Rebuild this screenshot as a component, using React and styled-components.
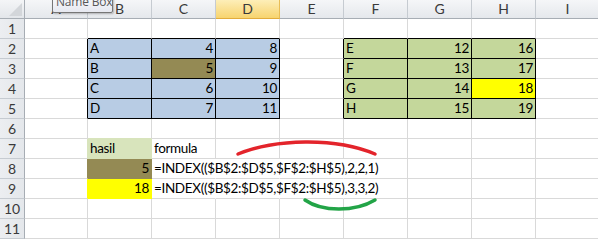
import React from "react";
import styled, { createGlobalStyle } from "styled-components";

const Global = createGlobalStyle`
  html, body { margin: 0; padding: 0; background: #fff; overflow: hidden; }
  body { width: 598px; height: 240px; }
`;

const GRID = "#d9d9d9";
const BLACK = "#000";
const HEAD_LINE = "#c6cbd1";
const HEAD_EDGE = "#a7adb4";

const Wrap = styled.div`
  position: relative;
  width: 598px;
  height: 240px;
  overflow: hidden;
  font-family: Lato, "Liberation Sans", sans-serif;
`;

const Sheet = styled.div`
  display: grid;
  grid-template-columns: 25px 63px repeat(8, 64px);
  grid-template-rows: 19px repeat(11, 20px);
  width: 600px;
`;

const Corner = styled.div`
  position: relative;
  box-sizing: border-box;
  background: linear-gradient(#f4f5f7, #e3e6ea);
  border-right: 1px solid ${HEAD_EDGE};
  border-bottom: 1px solid ${HEAD_EDGE};
  &::after {
    content: "";
    position: absolute;
    right: 2px;
    bottom: 2px;
    width: 0;
    height: 0;
    border-left: 13px solid transparent;
    border-bottom: 13px solid #d3d6da;
  }
`;

const ColHead = styled.div`
  box-sizing: border-box;
  background: ${(p) =>
    p.$active
      ? "linear-gradient(#fdeeb8, #f7d46f)"
      : "linear-gradient(#f5f6f8, #e5e8ec)"};
  border-right: 1px solid ${(p) => (p.$active ? "#e9bd55" : HEAD_LINE)};
  border-bottom: 1px solid ${(p) => (p.$active ? "#e2ac3c" : HEAD_EDGE)};
  color: #3a3a3a;
  font-size: 14px;
  line-height: 18px;
  text-align: center;
`;

const RowHead = styled.div`
  box-sizing: border-box;
  background: linear-gradient(90deg, #eceef1, #e4e7eb);
  border-right: 1px solid ${HEAD_EDGE};
  border-bottom: 1px solid ${HEAD_LINE};
  color: #3a3a3a;
  font-size: 14px;
  line-height: 19px;
  text-align: center;
`;

const Cell = styled.div`
  box-sizing: border-box;
  display: flex;
  align-items: flex-end;
  justify-content: ${(p) => (p.$right ? "flex-end" : "flex-start")};
  padding: 0 2px 2px 2px;
  background: ${(p) => p.$bg || "transparent"};
  border-right: 1px solid ${(p) => p.$rb};
  border-bottom: 1px solid ${(p) => p.$bb};
  color: #000;
  font-size: 13.5px;
  letter-spacing: -0.35px;
  line-height: 16px;
  white-space: nowrap;
  overflow: visible;
  min-width: 0;
`;

const Tooltip = styled.div`
  position: absolute;
  left: 52px;
  top: -9px;
  width: 61px;
  height: 22px;
  box-sizing: border-box;
  padding: 0 0 0 3px;
  background: linear-gradient(#ffffff, #e6e8f0);
  border: 1px solid #767676;
  border-radius: 2px;
  box-shadow: 1px 1px 2px rgba(0, 0, 0, 0.25);
  font-family: "Open Sans", "Noto Sans", sans-serif;
  font-size: 12px;
  letter-spacing: -0.2px;
  line-height: 20px;
  color: #575757;
  white-space: nowrap;
  overflow: hidden;
`;

const Marks = styled.svg`
  position: absolute;
  left: 0;
  top: 0;
  pointer-events: none;
`;

const COLS = ["A", "B", "C", "D", "E", "F", "G", "H", "I"];
const BLUE = "#b8cce4";
const OLIVE = "#948a54";
const GREEN = "#c4d79b";
const LIGHTGREEN = "#d8e4bc";
const YELLOW = "#ffff00";

const data = {
  B2: ["A"], C2: [4, BLUE], D2: [8, BLUE],
  B3: ["B"], C3: [5, OLIVE], D3: [9, BLUE],
  B4: ["C"], C4: [6, BLUE], D4: [10, BLUE],
  B5: ["D"], C5: [7, BLUE], D5: [11, BLUE],
  F2: ["E", GREEN], G2: [12, GREEN], H2: [16, GREEN],
  F3: ["F", GREEN], G3: [13, GREEN], H3: [17, GREEN],
  F4: ["G", GREEN], G4: [14, GREEN], H4: [18, YELLOW],
  F5: ["H", GREEN], G5: [15, GREEN], H5: [19, GREEN],
  B7: ["hasil", LIGHTGREEN],
  C7: ["formula"],
  B8: [5, OLIVE],
  C8: ["=INDEX(($B$2:$D$5,$F$2:$H$5),2,2,1)"],
  B9: [18, YELLOW],
  C9: ["=INDEX(($B$2:$D$5,$F$2:$H$5),3,3,2)"],
};

function inTable(c, r) {
  return r >= 2 && r <= 5 && ((c >= 1 && c <= 3) || (c >= 5 && c <= 7));
}

function fillOf(c, r) {
  const key = COLS[c] + r;
  const d = data[key];
  if (!d) return null;
  if (d[1]) return d[1];
  if (r >= 2 && r <= 5 && c === 1) return BLUE;
  return null;
}

function overflowHidden(c, r) {
  return (r === 8 || r === 9) && c >= 2 && c <= 4;
}

function cellProps(c, r) {
  const key = COLS[c] + r;
  const d = data[key];
  const bg = fillOf(c, r);
  let rb = GRID;
  let bb = GRID;
  if (bg) {
    rb = bg;
    bb = bg;
  } else {
    const rf = c + 1 < COLS.length ? fillOf(c + 1, r) : null;
    if (rf) rb = rf;
    const bf = r + 1 <= 11 ? fillOf(c, r + 1) : null;
    if (bf) bb = bf;
  }
  if (inTable(c, r) || inTable(c + 1, r)) rb = BLACK;
  if (inTable(c, r) || inTable(c, r + 1)) bb = BLACK;
  if (overflowHidden(c, r)) rb = "transparent";
  const value = d ? d[0] : "";
  const right = typeof value === "number";
  return { key, bg, rb, bb, value, right };
}

export default function App() {
  const rows = [];
  for (let r = 1; r <= 11; r++) {
    rows.push(<RowHead key={"r" + r}>{r}</RowHead>);
    COLS.forEach((_, c) => {
      const p = cellProps(c, r);
      rows.push(
        <Cell key={p.key} $bg={p.bg} $rb={p.rb} $bb={p.bb} $right={p.right}>
          {p.value}
        </Cell>
      );
    });
  }
  return (
    <Wrap>
      <Global />
      <Sheet>
        <Corner />
        {COLS.map((c) => (
          <ColHead key={c} $active={c === "D"}>
            {c}
          </ColHead>
        ))}
        {rows}
      </Sheet>
      <Tooltip>Name Box</Tooltip>
      <Marks width="598" height="240" viewBox="0 0 598 240">
        <path
          d="M238 154 C 275 139, 335 137, 375 154"
          fill="none"
          stroke="#e3242b"
          strokeWidth="3.5"
          strokeLinecap="round"
        />
        <path
          d="M305 200 C 322 212, 355 212, 375 200"
          fill="none"
          stroke="#22a447"
          strokeWidth="3.5"
          strokeLinecap="round"
        />
      </Marks>
    </Wrap>
  );
}
